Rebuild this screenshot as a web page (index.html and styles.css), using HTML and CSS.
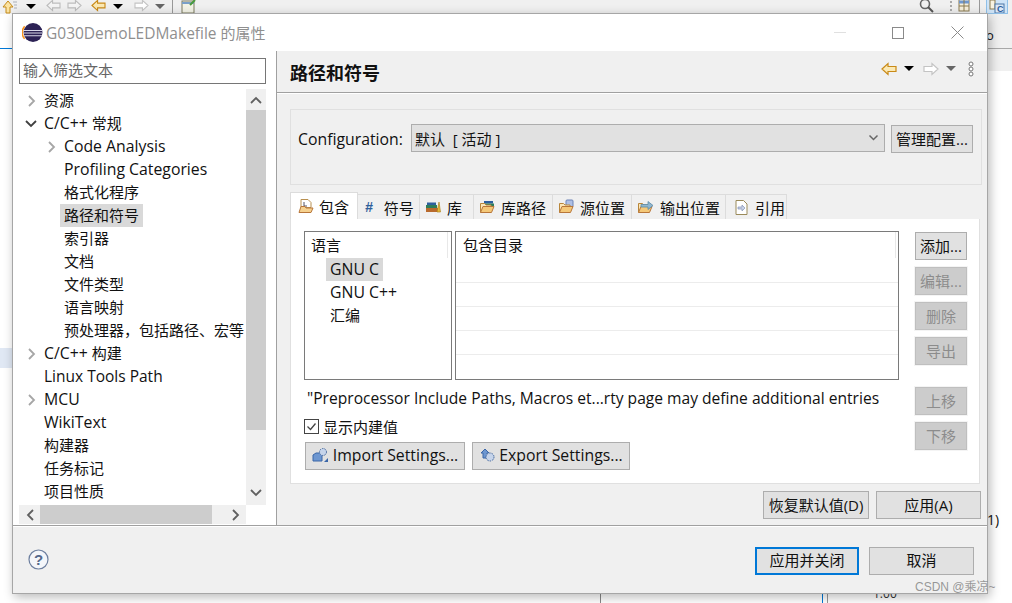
FILE: index.html
```html
<!DOCTYPE html>
<html lang="zh">
<head>
<meta charset="utf-8">
<title>G030DemoLEDMakefile 的属性</title>
<link rel="stylesheet" href="styles.css">
</head>
<body>
<svg class="defs" width="0" height="0">
  <defs>
    <symbol id="chev-r" viewBox="0 0 10 12"><path d="M2 1l5 5-5 5" fill="none" stroke="currentColor" stroke-width="1.8"/></symbol>
    <symbol id="chev-d" viewBox="0 0 12 10"><path d="M1 2l5 5 5-5" fill="none" stroke="currentColor" stroke-width="1.8"/></symbol>
    <symbol id="chev-u" viewBox="0 0 12 10"><path d="M1 8l5-5 5 5" fill="none" stroke="currentColor" stroke-width="1.8"/></symbol>
    <symbol id="chev-l" viewBox="0 0 10 12"><path d="M8 1L3 6l5 5" fill="none" stroke="currentColor" stroke-width="1.8"/></symbol>
    <symbol id="arrow-l" viewBox="0 0 16 14"><path d="M1 7l6-5.500V4.500h8v5H7v3z" fill="#fbe9b4" stroke="#c98a17" stroke-width="1.200"/></symbol>
    <symbol id="arrow-r" viewBox="0 0 16 14"><path d="M15 7L9 1.500V4.500H1v5h8v3z" fill="#fff" stroke="#c4c4c4" stroke-width="1.200"/></symbol>
    <symbol id="ghost-l" viewBox="0 0 16 14"><path d="M1 7l6-5.500V4.500h8v5H7v3z" fill="#f4f4f4" stroke="#bdbdbd" stroke-width="1.200"/></symbol>
    <symbol id="ghost-r" viewBox="0 0 16 14"><path d="M15 7L9 1.500V4.500H1v5h8v3z" fill="#f4f4f4" stroke="#bdbdbd" stroke-width="1.200"/></symbol>
    <symbol id="folder" viewBox="0 0 16 16"><path d="M1.500 13.500v-9h4l1.500 1.500h5v2" fill="#fbe6b8" stroke="#b8863a"/><path d="M1.500 13.500l2.500-6h11l-2.500 6z" fill="#f4c878" stroke="#b8763a"/></symbol>
  </defs>
</svg>

<div class="app">
  <div class="app-toolbar">
    <div class="tb-left">
      <svg class="tb-up" width="16" height="14" viewBox="0 0 16 14"><path d="M6 1l5 6H8v6H4V7H1z" fill="#fbe3a0" stroke="#c48a1a"/><path d="M11 2h4M12 5h3M12 8h3" stroke="#aab0ba"/></svg>
      <i class="tri tri-k tb-tri1"></i>
      <svg class="tb-g1" width="17" height="13"><use href="#ghost-l"/></svg>
      <svg class="tb-g2" width="17" height="13"><use href="#ghost-r"/></svg>
      <svg class="tb-a1" width="17" height="13"><use href="#arrow-l"/></svg>
      <i class="tri tri-k tb-tri2"></i>
      <svg class="tb-a2" width="17" height="13"><use href="#arrow-r"/></svg>
      <i class="tri tri-g tb-tri3"></i>
      <span class="tb-sep"></span>
      <svg class="tb-new" width="16" height="14" viewBox="0 0 16 14"><rect x="1" y="2" width="12" height="12" fill="#f3f3e6" stroke="#7a7a5e"/><path d="M1 4h12" stroke="#7aa0c8" stroke-width="2"/><path d="M9 6l5-5" stroke="#4a9a3a" stroke-width="2"/></svg>
    </div>
    <div class="tb-right">
      <svg width="16" height="14" viewBox="0 0 16 14"><circle cx="6" cy="5" r="4.500" fill="none" stroke="#666" stroke-width="1.600"/><path d="M9 8l5 5" stroke="#555" stroke-width="2"/></svg>
      <span class="tb-dots"></span>
      <svg width="15" height="13" viewBox="0 0 15 13"><rect x="1" y="0" width="10" height="12" fill="#f6efdc" stroke="#8a7a50"/><path d="M1 3h10" stroke="#6f97cf" stroke-width="3"/><path d="M6 0v12M1 7h10" stroke="#8a7a50"/></svg>
      <span class="tb-sep2"></span>
      <span class="persp"><svg width="16" height="13" viewBox="0 0 16 13"><rect x="1" y="0" width="5" height="9" fill="#f8f2e0" stroke="#8a7a50"/><rect x="6" y="4" width="9" height="9" fill="#dbe8f5" stroke="#4d76a8"/><text class="persp-c" x="8" y="12">C</text></svg></span>
    </div>
  </div>
  <div class="app-strip">
    <span class="edge-blue"></span>
    <span class="strip-right"></span>
  </div>
  <span class="peek peek-o">o</span>
  <span class="peek peek-1">1)</span>
  <span class="peek peek-v"></span>
  <span class="peek peek-v2"></span>
  <span class="peek peek-v3"></span>
  <span class="peek peek-num">1.00</span>
  <span class="left-hl"></span>
</div>

<section class="dialog">
  <header class="titlebar">
    <svg class="logo" width="21" height="21" viewBox="0 0 20 20">
      <circle cx="10.500" cy="10" r="9" fill="#2c2255"/>
      <path d="M2.500 4a9 9 0 0 0 0 12" stroke="#f7941e" stroke-width="1.500" fill="none"/>
      <path d="M1.500 8h18M1.500 10.500h18M2 13h17" stroke="#d8d8e8" stroke-width="1"/>
    </svg>
    <h1 class="win-title"><span class="en">G030DemoLEDMakefile</span> 的属性</h1>
    <div class="win-ctrls">
      <span class="wc-min"></span>
      <span class="wc-max"></span>
      <svg class="wc-close" width="13" height="13" viewBox="0 0 13 13"><path d="M0.500 0.500l12 12M12.500 0.500l-12 12" stroke="#8a8a8a" stroke-width="1"/></svg>
    </div>
  </header>

  <div class="main">
    <aside class="side">
      <div class="filter">输入筛选文本</div>
      <div class="tree">
        <ul class="tree-list">
          <li class="row"><svg class="tw gray" width="10" height="12"><use href="#chev-r"/></svg><span>资源</span></li>
          <li class="row"><svg class="tw dark" width="12" height="10"><use href="#chev-d"/></svg><span><span class="en">C/C++</span> 常规</span></li>
          <li class="row l2"><svg class="tw gray" width="10" height="12"><use href="#chev-r"/></svg><span class="en">Code Analysis</span></li>
          <li class="row l2 leaf"><span class="en">Profiling Categories</span></li>
          <li class="row l2 leaf"><span>格式化程序</span></li>
          <li class="row l2 leaf"><span class="picked">路径和符号</span></li>
          <li class="row l2 leaf"><span>索引器</span></li>
          <li class="row l2 leaf"><span>文档</span></li>
          <li class="row l2 leaf"><span>文件类型</span></li>
          <li class="row l2 leaf"><span>语言映射</span></li>
          <li class="row l2 leaf"><span>预处理器，包括路径、宏等</span></li>
          <li class="row"><svg class="tw gray" width="10" height="12"><use href="#chev-r"/></svg><span><span class="en">C/C++</span> 构建</span></li>
          <li class="row leaf1"><span class="en en-path">Linux Tools Path</span></li>
          <li class="row"><svg class="tw gray" width="10" height="12"><use href="#chev-r"/></svg><span class="en">MCU</span></li>
          <li class="row leaf1"><span class="en">WikiText</span></li>
          <li class="row leaf1"><span>构建器</span></li>
          <li class="row leaf1"><span>任务标记</span></li>
          <li class="row leaf1"><span>项目性质</span></li>
        </ul>
        <div class="vbar">
          <span class="vbtn"><svg width="12" height="10"><use href="#chev-u"/></svg></span>
          <span class="vthumb"></span>
          <span class="vtrack"></span>
          <span class="vbtn vbtn-d"><svg width="12" height="10"><use href="#chev-d"/></svg></span>
        </div>
        <div class="hbar">
          <span class="hbtn"><svg width="10" height="12"><use href="#chev-l"/></svg></span>
          <span class="hthumb"></span>
          <span class="htrack"></span>
          <span class="hbtn"><svg width="10" height="12"><use href="#chev-r"/></svg></span>
        </div>
      </div>
    </aside>

    <div class="pane">
      <div class="pane-head">
        <h2 class="pane-title">路径和符号</h2>
        <div class="pane-nav">
          <svg width="16" height="14"><use href="#arrow-l"/></svg>
          <i class="tri tri-k"></i>
          <svg class="nav-f" width="16" height="14"><use href="#arrow-r"/></svg>
          <i class="tri tri-g"></i>
          <svg class="nav-m" width="6" height="16" viewBox="0 0 6 16"><circle cx="3" cy="3" r="2" fill="#fff" stroke="#777"/><circle cx="3" cy="8" r="2" fill="#fff" stroke="#777"/><circle cx="3" cy="13" r="2" fill="#fff" stroke="#777"/></svg>
        </div>
      </div>

      <div class="pane-body">
        <div class="config">
          <span class="config-label en">Configuration:</span>
          <div class="select"><span>默认&nbsp; [ 活动 ]</span><svg width="11" height="8" class="sel-ch" viewBox="0 0 12 10"><use href="#chev-d"/></svg></div>
          <button class="btn btn-manage">管理配置...</button>
        </div>

        <div class="tabs">
          <div class="tab active">
            <svg width="17" height="16" viewBox="0 0 17 16"><path d="M3 1.500h7l3 3v5H3z" fill="#fff" stroke="#b89050"/><path d="M6 4v4h3" stroke="#556" fill="none"/><path d="M1 14.500l2-6h4l1 1.500h7l-2 4.500z" fill="#f6d18e" stroke="#b8763a"/></svg>
            <span>包含</span>
          </div>
          <div class="tab t-sym"><span class="hash">#</span><span>符号</span></div>
          <div class="tab t-lib">
            <svg width="16" height="14" viewBox="0 0 16 14"><rect x="1" y="8" width="12" height="4" fill="#b86a2e"/><rect x="1" y="5" width="11" height="3" fill="#2e7d5a"/><rect x="2" y="2.500" width="9" height="2.500" fill="#2e5f9e"/><path d="M12 12l2-10 1.500 10z" fill="#e6b93a" stroke="#a87a10" stroke-width=".6"/></svg>
            <span>库</span>
          </div>
          <div class="tab t-libp">
            <svg width="17" height="16" viewBox="0 0 17 16"><rect x="5" y="2" width="9" height="2.500" fill="#2e5f9e"/><rect x="5" y="4.500" width="10" height="3" fill="#2e7d5a"/><use href="#folder" width="16" height="16"/></svg>
            <span>库路径</span>
          </div>
          <div class="tab t-src">
            <svg width="16" height="16" viewBox="0 0 16 16"><rect x="8" y="1" width="7" height="7" rx="1" fill="#aebfe4" stroke="#6c83b6"/><use href="#folder" width="16" height="16"/></svg>
            <span>源位置</span>
          </div>
          <div class="tab t-out">
            <svg width="17" height="16" viewBox="0 0 17 16"><use href="#folder" width="16" height="16"/><path d="M4 5.500h7V2.500l5 4-5 4V8H4z" fill="#8fb6cf" stroke="#5c8aa6" stroke-width=".8"/></svg>
            <span>输出位置</span>
          </div>
          <div class="tab t-ref">
            <svg width="13" height="15" viewBox="0 0 13 15"><path d="M1 .500h7.500l3.500 3.500v10.500H1z" fill="#fff" stroke="#9a8a5a"/><path d="M3 7h4V5l3 3-3 3V9H3z" fill="#c8d2e6" stroke="#8494b8" stroke-width=".7"/></svg>
            <span>引用</span>
          </div>
        </div>

        <div class="tab-panel">
          <div class="tables">
            <div class="lang-box">
              <div class="lang-head">语言</div>
              <div class="lang-item"><span class="lang-sel en">GNU C</span></div>
              <div class="lang-item"><span class="en">GNU C++</span></div>
              <div class="lang-item"><span>汇编</span></div>
            </div>
            <div class="dir-box">
              <div class="dir-head">包含目录</div>
              <div class="dir-row"></div>
              <div class="dir-row"></div>
              <div class="dir-row"></div>
              <div class="dir-row"></div>
              <div class="dir-row"></div>
            </div>
            <div class="note">"Preprocessor Include Paths, Macros et...rty page may define additional entries</div>
            <label class="check"><span class="box"><svg width="13" height="13" viewBox="0 0 13 13"><path d="M2.500 6.500l3 3 5-6" fill="none" stroke="#444" stroke-width="1.300"/></svg></span>显示内建值</label>
            <div class="io-row">
              <button class="btn btn-io btn-import">
                <svg width="17" height="15" viewBox="0 0 17 15"><path d="M1 13V7l3-2h6v8z" fill="#6d96d0" stroke="#3a66a8"/><circle cx="11" cy="4" r="3.500" fill="#c6d4ea" stroke="#44669a" stroke-dasharray="1.500 1"/><path d="M16 10v4h-4z" fill="#3a66a8"/></svg>
                <span class="en">Import Settings...</span>
              </button>
              <button class="btn btn-io btn-export">
                <svg width="16" height="15" viewBox="0 0 16 15"><path d="M2 5l4-4 4 4H8v5H4V5z" fill="#6d96d0" stroke="#3a66a8"/><circle cx="11" cy="9" r="4" fill="#c6d4ea" stroke="#44669a" stroke-dasharray="1.500 1"/></svg>
                <span class="en">Export Settings...</span>
              </button>
            </div>
          </div>
          <div class="side-btns">
            <button class="btn">添加...</button>
            <button class="btn off">编辑...</button>
            <button class="btn off">删除</button>
            <button class="btn off">导出</button>
            <button class="btn off btn-up">上移</button>
            <button class="btn off">下移</button>
          </div>
        </div>

        <div class="apply-row">
          <button class="btn btn-restore">恢复默认值(D)</button>
          <button class="btn btn-apply">应用(A)</button>
        </div>
      </div>
    </div>
  </div>

  <footer class="foot">
    <svg class="help" width="21" height="21" viewBox="0 0 21 21"><circle cx="10.500" cy="10.500" r="9.500" fill="#f4f6fa" stroke="#6d7f9f" stroke-width="1.200"/><text class="help-q" x="10.500" y="16">?</text></svg>
    <div class="foot-btns">
      <button class="btn btn-ok">应用并关闭</button>
      <button class="btn btn-cancel">取消</button>
    </div>
  </footer>
</section>

<div class="watermark">CSDN @乘凉~</div>
</body>
</html>
```

FILE: styles.css
```css
* { box-sizing: border-box; }
html, body { margin: 0; padding: 0; }
body {
  position: relative;
  width: 1012px;
  height: 603px;
  overflow: hidden;
  background: #fff;
  font-family: "Open Sans", "Noto Sans CJK SC", sans-serif;
  font-size: 15px;
  color: #111;
}
.defs { position: absolute; }
.en { font-size: 15.800px; }
.en-path { font-size: 15.500px; }
ul { list-style: none; margin: 0; padding: 0; }
h1, h2 { margin: 0; font-weight: normal; }

/* background application */
.app-toolbar {
  display: flex;
  justify-content: space-between;
  height: 14px;
  background: #f0f0f0;
}
.tb-left { display: flex; align-items: flex-start; height: 14px; margin-top: -1px; padding-left: 2px; }
.tb-up { margin-top: 1px; }
.tb-tri1 { margin-left: 8px; }
.tb-g1 { margin-left: 9px; }
.tb-g2 { margin-left: 4px; }
.tb-a1 { margin-left: 7px; }
.tb-tri2 { margin-left: 6px; }
.tb-a2 { margin-left: 10px; }
.tb-tri3 { margin-left: 5px; }
.tb-sep { width: 1px; height: 14px; background: #999; margin-left: 7px; }
.tb-new { margin-left: 8px; }
.tb-right { display: flex; align-items: flex-start; height: 14px; gap: 12px; padding-right: 4px; margin-top: -1px; }
.tb-dots { width: 2px; height: 11px; margin: 2px -6px 0 3px; background: repeating-linear-gradient(#aaa 0 2px, transparent 2px 4px); }
.tb-sep2 { width: 1px; height: 14px; background: #999; margin-left: -6px; margin-right: -6px; }
.persp { display: block; width: 22px; height: 15px; background: #cfe4f7; border: 1px solid #8fc0e8; padding-left: 2px; }
.persp svg { display: block; }
.persp-c { font: bold 9px "Liberation Sans", sans-serif; fill: #2a5a9a; }
.app-strip { display: flex; justify-content: space-between; align-items: flex-start; height: 57px; }
.edge-blue { width: 12px; height: 1px; margin-top: 34px; background: #0078d7; }
.strip-right { width: 25px; height: 57px; background: #f0f0f0; border-top: 34px solid #f0f0f0; box-shadow: inset 0 1px 0 #a8a8a8; }
.peek { position: absolute; }
.peek-o { left: 986px; top: 27px; font-size: 13px; line-height: 16px; }
.peek-1 { left: 987px; top: 510px; line-height: 20px; font-size: 14px; }
.peek-v { left: 600px; top: 594px; width: 1px; height: 9px; background: #888; }
.peek-v2 { left: 822px; top: 594px; width: 1px; height: 9px; background: #0078d7; }
.peek-v3 { left: 827px; top: 594px; width: 1px; height: 9px; background: #999; }
.peek-num { left: 873px; top: 588px; font-size: 12px; line-height: 12px; color: #333; }
.left-hl { position: absolute; left: 0; top: 348px; width: 12px; height: 20px; background: #e0e8f4; }

/* triangles */
.tri { display: inline-block; width: 0; height: 0; flex: none; border-left: 5px solid transparent; border-right: 5px solid transparent; border-top: 5px solid #000; }
.tri-g { border-top-color: #666; }
.tb-left .tri { margin-top: 5px; }

/* dialog */
.dialog {
  position: absolute;
  left: 12px;
  top: 13px;
  width: 976px;
  height: 581px;
  display: flex;
  flex-direction: column;
  background: #f0f0f0;
  border: 1px solid #a6a6a6;
  box-shadow: 2px 3px 10px rgba(0, 0, 0, .28);
}
.titlebar {
  flex: none;
  display: flex;
  align-items: center;
  height: 37px;
  padding-left: 9px;
  background: #fff;
}
.logo { flex: none; }
.win-title { margin-left: 3px; font-size: 15px; color: #8f8f8f; white-space: nowrap; }
.win-title .en { font-size: 15.500px; }
.win-ctrls { margin-left: auto; display: flex; align-items: center; }
.wc-min { width: 12px; height: 1px; background: #e0e0e0; margin-right: 46px; }
.wc-max { width: 12px; height: 12px; border: 1px solid #8a8a8a; margin-right: 47px; }
.wc-close { margin-right: 23px; }

.main { flex: 1; display: flex; min-height: 0; }
.side {
  flex: none;
  width: 264px;
  display: flex;
  flex-direction: column;
  padding: 7px 10px 0 6px;
  background: #fff;
  border-right: 1px solid #a0a0a0;
}
.filter {
  flex: none;
  width: 247px;
  height: 26px;
  padding-left: 3px;
  border: 1px solid #767676;
  font-size: 15px;
  line-height: 23px;
  color: #666;
}
.tree {
  flex: 1;
  display: grid;
  grid-template-columns: 227px 20px;
  grid-template-rows: 416px 19px;
  margin-top: 5px;
  width: 247px;
}
.tree-list { overflow: hidden; }
.row {
  display: flex;
  align-items: center;
  height: 23px;
  padding-left: 8px;
  white-space: nowrap;
  font-size: 15px;
  line-height: 23px;
}
.tw { flex: none; margin-right: 7px; }
.row svg[width="12"] { margin-left: -2px; margin-right: 7px; }
.gray { color: #a6a6a6; }
.dark { color: #404040; }
.row.l2 { padding-left: 28px; }
.row.leaf { padding-left: 45px; }
.row.leaf1 { padding-left: 25px; }
.picked { background: #d9d9d9; margin-left: -4px; padding: 0 4px; }

.vbar { display: flex; flex-direction: column; background: #f0f0f0; }
.vbtn { flex: none; display: flex; align-items: center; justify-content: center; height: 21px; color: #606060; }
.vbtn-d { height: 25px; }
.vthumb { flex: none; height: 320px; background: #cdcdcd; }
.vtrack { flex: 1; }
.hbar { display: flex; background: #f0f0f0; }
.hbtn { flex: none; display: flex; align-items: center; justify-content: center; width: 21px; color: #606060; }
.hthumb { flex: none; width: 172px; background: #cdcdcd; }
.htrack { flex: 1; }

/* right pane */
.pane { flex: 1; display: flex; flex-direction: column; min-width: 0; background: #f0f0f0; }
.pane-head {
  flex: none;
  display: flex;
  align-items: center;
  height: 42px;
  padding: 0 13px;
  border-bottom: 1px solid #a0a0a0;
}
.pane-title { font-size: 18px; font-weight: 700; }
.pane-nav { margin: 0 0 6px auto; display: flex; align-items: center; gap: 7px; }
.nav-f { margin-left: 2px; }
.nav-m { margin-left: 5px; }
.pane-body {
  flex: 1;
  display: flex;
  flex-direction: column;
  padding: 15px 5px 0 13px;
  border-top: 1px solid #fff;
}
.config {
  flex: none;
  display: flex;
  align-items: flex-start;
  height: 76px;
  padding: 14px 8px 0 7px;
  border: 1px solid #e0e0e0;
}
.config-label { width: 113px; padding-top: 1px; line-height: 28px; white-space: nowrap; }
.select {
  width: 474px;
  height: 28px;
  display: flex;
  align-items: center;
  justify-content: space-between;
  padding: 0 5px 0 3px;
  background: #e1e1e1;
  border: 1px solid #adadad;
  font-size: 15px;
}
.sel-ch { color: #666; }
.btn {
  display: block;
  padding: 0 0 2px;
  height: 28px;
  background: #e1e1e1;
  border: 1px solid #adadad;
  font-family: inherit;
  font-size: 15px;
  color: #111;
  white-space: nowrap;
}
.btn-manage { width: 82px; margin: 1px 0 0 6px; }

.tabs { flex: none; display: flex; align-items: flex-end; height: 27px; margin-top: 7px; width: 690px; }
.tab {
  display: flex;
  align-items: center;
  gap: 6px;
  height: 25px;
  padding-left: 5px;
  background: #f0f0f0;
  border: 1px solid #dcdcdc;
  border-bottom: 0;
  border-left: 0;
  font-size: 15px;
  white-space: nowrap;
}
.tab.active { width: 68px; height: 27px; gap: 4px; background: #fff; border-left: 1px solid #dcdcdc; padding-left: 7px; }
.t-sym { width: 62px; }
.t-lib { width: 54px; }
.t-libp { width: 79px; gap: 5px; }
.t-src { width: 79px; }
.t-out { width: 94px; }
.t-ref { width: 61px; padding-left: 9px; gap: 7px; }
.hash { font: bold 14px "Liberation Sans", sans-serif; color: #2f5f9a; font-style: italic; margin-left: 2px; margin-right: 5px; }

.tab-panel {
  flex: none;
  display: flex;
  width: 690px;
  height: 265px;
  padding: 12px 0 0 13px;
  background: #fff;
  border: 1px solid #e0e0e0;
  border-top: 0;
}
.tables {
  width: 596px;
  display: grid;
  grid-template-columns: 148px 444px;
  grid-template-rows: 149px 33px 29px 28px;
  column-gap: 3px;
}
.lang-box, .dir-box { border: 1px solid #7a7a7a; overflow: hidden; }
.lang-head, .dir-head { height: 26px; line-height: 26px; font-size: 15px; padding-left: 6px; margin-right: 3px; border-right: 1px solid #e8e8e8; }
.dir-head { padding-left: 7px; margin-right: 2px; }
.lang-item { height: 23px; line-height: 23px; padding-left: 25px; font-size: 15px; }
.lang-item span { display: inline-block; height: 23px; }
.lang-sel { background: #d9d9d9; padding: 0 4px; margin-left: -4px; }
.dir-row { height: 24px; border-top: 1px solid #ececec; }
.dir-head + .dir-row { border-top: 0; }
.note { grid-column: 1 / 3; align-self: center; padding-left: 3px; margin-top: 2px; font-size: 15.600px; white-space: nowrap; }
.check { grid-column: 1 / 3; display: flex; align-items: center; gap: 4px; font-size: 15px; padding-bottom: 3px; }
.box { width: 15px; height: 15px; border: 1px solid #444; background: #fff; display: flex; align-items: center; justify-content: center; }
.io-row { grid-column: 1 / 3; display: flex; gap: 7px; padding-left: 1px; }
.btn-io { display: flex; align-items: center; justify-content: center; gap: 4px; height: 28px; }
.btn-import { width: 160px; }
.btn-export { width: 158px; }
.side-btns { margin-left: 15px; padding-top: 1px; display: flex; flex-direction: column; gap: 7px; }
.side-btns .btn { width: 52px; height: 28px; }
.off { background: #ccc; color: #8c8c8c; border-color: #bfbfbf; box-shadow: 0 0 0 1px #f4f4f4; }
.btn-up { margin-top: 15px; }

.apply-row { flex: none; display: flex; justify-content: flex-end; gap: 7px; margin: 7px 1px 0 0; }
.btn-restore { width: 106px; }
.btn-apply { width: 105px; }

.foot {
  flex: none;
  display: flex;
  align-items: center;
  height: 68px;
  padding: 2px 13px 0 15px;
  background: #f0f0f0;
  border-top: 1px solid #a0a0a0;
  box-shadow: inset 0 1px 0 #fff;
}
.help { margin-top: -2px; }
.help-q { font: bold 15px "Liberation Sans", sans-serif; fill: #55698c; text-anchor: middle; }
.foot-btns { margin-left: auto; display: flex; gap: 10px; }
.btn-ok { width: 104px; border: 2px solid #0078d7; }
.btn-cancel { width: 105px; }

.watermark {
  position: absolute;
  left: 915px;
  top: 580px;
  font-family: "Liberation Sans", "Noto Sans CJK SC", sans-serif;
  font-size: 12px;
  line-height: 14px;
  color: rgba(120, 120, 120, .75);
  white-space: nowrap;
}
```
